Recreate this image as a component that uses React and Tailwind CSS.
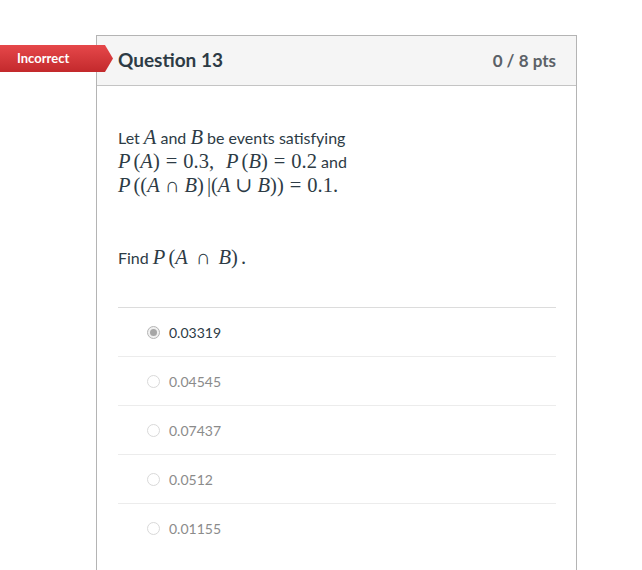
import React from "react";

const serif = { fontFamily: '"Liberation Serif", "DejaVu Serif", serif' };

function V({ children, className = "" }) {
  return (
    <span className={`italic text-[20.5px] leading-none ${className}`} style={serif}>
      {children}
    </span>
  );
}
function M({ children, className = "" }) {
  return (
    <span className={`text-[20.5px] leading-none ${className}`} style={serif}>
      {children}
    </span>
  );
}
function Rel({ children }) {
  return (
    <span className="text-[20.5px] leading-none mx-[6px]" style={serif}>
      {children}
    </span>
  );
}
function Bin({ children }) {
  return (
    <span className="text-[20.5px] leading-none mx-[5px]" style={serif}>
      {children}
    </span>
  );
}

function Radio({ selected }) {
  return selected ? (
    <span className="w-[13px] h-[13px] rounded-full border border-[#b5b5b5] bg-[#f0f0f0] flex items-center justify-center shrink-0">
      <span className="w-[7px] h-[7px] rounded-full bg-[#a6a6a6]" />
    </span>
  ) : (
    <span className="w-[13px] h-[13px] rounded-full border-[1.5px] border-[#d9d9d9] bg-white shrink-0" />
  );
}

const answers = ["0.03319", "0.04545", "0.07437", "0.0512", "0.01155"];

export default function App() {
  return (
    <div
      className="min-h-[570px] bg-white pt-[35px] pl-[96px] overflow-hidden"
      style={{ fontFamily: 'Lato, "Liberation Sans", sans-serif' }}
    >
      <div className="relative w-[481px] min-h-[535px] border border-b-0 border-[#b4b4b4]">
        <div className="absolute left-[-97px] top-[9px] h-[27px] w-[113px] bg-gradient-to-b from-[#e6474a] to-[#c3292c] [clip-path:polygon(0_0,calc(100%-8px)_0,100%_50%,calc(100%-8px)_100%,0_100%)] flex items-center pl-[17px]">
          <span className="text-white font-bold text-[13px] leading-none">Incorrect</span>
        </div>
        <div className="h-[50px] bg-[#f5f5f5] border-b border-[#c4c4c4] flex items-center justify-between pl-[21px] pr-[20px]">
          <span className="text-[19px] font-bold text-[#2d3b45]">Question 13</span>
          <span className="text-[17px] font-bold text-[#5b6167]">0 / 8 pts</span>
        </div>
        <div className="pl-[21px] pr-[20px] pt-[40px] text-[16px] text-[#2d3b45]">
          <div className="leading-[24px]">
            <div className="h-[24px]">
              Let <V>A</V> and <V>B</V> be events satisfying
            </div>
            <div className="h-[24px]">
              <V>P</V>
              <M className="ml-[3px]">(</M>
              <V>A</V>
              <M>)</M>
              <Rel>=</Rel>
              <M>0.3,</M>
              <span className="inline-block w-[12px]" />
              <V>P</V>
              <M className="ml-[3px]">(</M>
              <V>B</V>
              <M>)</M>
              <Rel>=</Rel>
              <M>0.2</M> and
            </div>
            <div className="h-[24px]">
              <V>P</V>
              <M className="ml-[3px]">((</M>
              <V>A</V>
              <Bin>∩</Bin>
              <V>B</V>
              <M>)</M>
              <M className="ml-[3px]">|(</M>
              <V>A</V>
              <Bin>∪</Bin>
              <V>B</V>
              <M>))</M>
              <Rel>=</Rel>
              <M>0.1.</M>
            </div>
          </div>
          <div className="mt-[48px] h-[24px] leading-[24px]">
            Find <V>P</V>
            <M className="ml-[3px]">(</M>
            <V>A</V>
            <M className="mx-[8px]">∩</M>
            <V>B</V>
            <M>)</M>
            <M className="ml-[3px]">.</M>
          </div>
          <div className="mt-[37px] border-t border-[#dcdcdc]">
            {answers.map((a, i) => (
              <div
                key={a}
                className={`flex items-center pl-[29px] gap-[9px] ${
                  i < answers.length - 1 ? "border-b border-[#ececec] h-[49px]" : "h-[48px]"
                }`}
              >
                <Radio selected={i === 0} />
                <span
                  className={`text-[14px] ${i === 0 ? "text-[#2d3b45]" : "text-[#8b8b8b]"}`}
                >
                  {a}
                </span>
              </div>
            ))}
          </div>
        </div>
      </div>
    </div>
  );
}
